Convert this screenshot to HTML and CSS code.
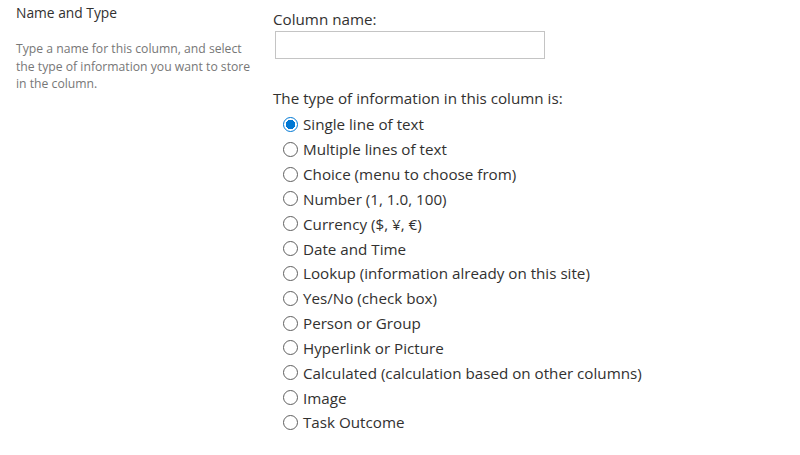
FILE: index.html
```html
<!DOCTYPE html>
<html>
<head>
<meta charset="utf-8">
<link rel="stylesheet" href="styles.css">
</head>
<body>
<div class="page">
  <div class="side">
    <div class="side-title">Name and Type</div>
    <div class="side-desc">Type a name for this column, and select the type of information you want to store in the column.</div>
  </div>
  <div class="main">
    <div class="label">Column name:</div>
    <div class="input"></div>
    <div class="label type-label">The type of information in this column is:</div>
    <div class="options">
      <div class="opt"><span class="radio on"></span>Single line of text</div>
      <div class="opt"><span class="radio"></span>Multiple lines of text</div>
      <div class="opt"><span class="radio"></span>Choice (menu to choose from)</div>
      <div class="opt"><span class="radio"></span>Number (1, 1.0, 100)</div>
      <div class="opt"><span class="radio"></span>Currency ($, ¥, €)</div>
      <div class="opt"><span class="radio"></span>Date and Time</div>
      <div class="opt"><span class="radio"></span>Lookup (information already on this site)</div>
      <div class="opt"><span class="radio"></span>Yes/No (check box)</div>
      <div class="opt"><span class="radio"></span>Person or Group</div>
      <div class="opt"><span class="radio"></span>Hyperlink or Picture</div>
      <div class="opt"><span class="radio"></span>Calculated (calculation based on other columns)</div>
      <div class="opt"><span class="radio"></span>Image</div>
      <div class="opt"><span class="radio"></span>Task Outcome</div>
    </div>
  </div>
</div>
</body>
</html>
```
FILE: styles.css
```css
html, body {
  margin: 0;
  padding: 0;
  background: #ffffff;
}
body {
  font-family: "Open Sans", "Noto Sans", sans-serif;
  color: #323130;
  width: 800px;
  height: 455px;
  overflow: hidden;
}
.page {
  display: flex;
  padding-left: 16px;
}
.side {
  width: 244px;
  flex: none;
  padding-top: 3px;
}
.side-title {
  font-size: 13.8px;
  line-height: 20px;
  color: #323130;
}
.side-desc {
  margin-top: 17px;
  font-size: 12.2px;
  line-height: 17.5px;
  color: #777777;
}
.main {
  margin-left: 13px;
  padding-top: 9px;
}
.label {
  font-size: 15.2px;
  line-height: 20px;
  color: #323130;
}
.input {
  margin-top: 2px;
  margin-left: 2px;
  width: 268px;
  height: 26px;
  border: 1px solid #c4c4c4;
}
.type-label {
  margin-top: 29px;
}
.options {
  margin-top: 4px;
}
.opt {
  display: flex;
  align-items: center;
  height: 24.83px;
  font-size: 15.2px;
  color: #323130;
}
.radio {
  box-sizing: border-box;
  width: 15px;
  height: 15px;
  border: 1px solid #5f5f5f;
  border-radius: 50%;
  margin-left: 10px;
  margin-right: 5px;
  flex: none;
}
.radio.on {
  border-color: #0078d4;
  background: radial-gradient(circle, #0078d4 0 4.5px, #ffffff 5px);
}
```
